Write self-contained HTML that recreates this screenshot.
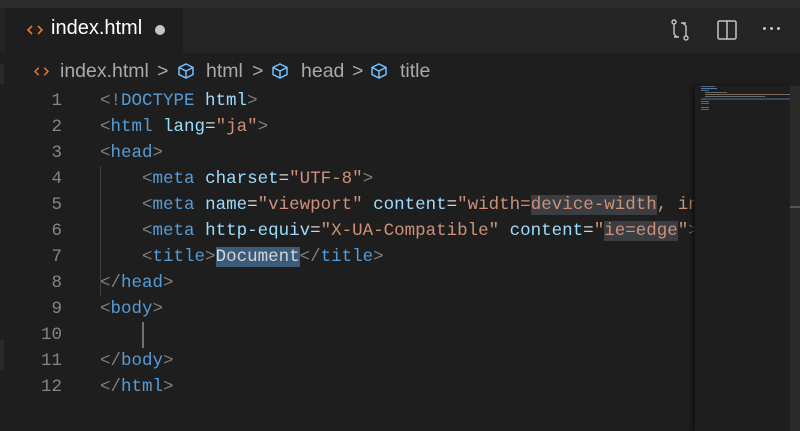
<!DOCTYPE html><html><head><style>
body{margin:0;width:800px;height:431px;background:#1e1e1e;overflow:hidden;position:relative;font-family:"Liberation Sans",sans-serif}
.top{position:absolute;left:0;top:0;width:800px;height:8px;background:#2c2c2c}
.tabbar{position:absolute;left:0;top:8px;width:800px;height:45px;background:#252526}
.tab{position:absolute;left:5px;top:0;width:178px;height:45px;background:#1e1e1e;color:#fff;font-size:20px}
.crumb{position:absolute;top:58px;left:0;height:26px;color:#a9a9a9;font-size:19.5px;line-height:26px;white-space:nowrap}
.code{position:absolute;left:0;top:88px;width:695px;height:343px;overflow:hidden;font-family:"Liberation Mono",monospace;font-size:17.5px}
.ln{position:absolute;left:0;width:62px;text-align:right;color:#858585;line-height:26px}
.line{position:absolute;left:100px;white-space:pre;line-height:26px;color:#d4d4d4}
.b{color:#808080}.t{color:#569cd6}.a{color:#9cdcfe}.s{color:#ce9178}
.hl{background:#3a3d41}.sel{background:#3b5b7a}
.guide{position:absolute;left:100px;width:1px;background:#404040}
.mini{position:absolute;left:695px;top:86px;width:95px;height:345px;background:#1e1e1e;box-shadow:-3px 0 4px #111}
.sb{position:absolute;left:790px;top:86px;width:10px;height:345px;background:#2a2a2a}
</style></head><body>
<div class="top"></div>
<div class="tabbar">
<div class="tab">
<svg style="position:absolute;left:22px;top:15px" width="16" height="14" viewBox="0 0 16 14"><path d="M5 3L1 7l4 4M11 3l4 4-4 4" stroke="#e37933" stroke-width="1.6" fill="none"/></svg>
<span style="position:absolute;left:46px;top:9px">index.html</span>
<div style="position:absolute;left:150px;top:17px;width:10px;height:10px;border-radius:50%;background:#c5c5c5"></div>
</div>
<svg style="position:absolute;left:668px;top:10px" width="24" height="24" viewBox="0 0 24 24" fill="none" stroke="#c5c5c5" stroke-width="1.4"><circle cx="6" cy="4" r="2"/><circle cx="18" cy="20" r="2"/><path d="M6 6v10l3 3M18 18V8l-3-3"/><path d="M11 19H6M13 5h5"/></svg>
<svg style="position:absolute;left:716px;top:11px" width="22" height="22" viewBox="0 0 22 22" fill="none" stroke="#c5c5c5" stroke-width="1.5"><rect x="2" y="2" width="18" height="18" rx="1.5"/><path d="M11 2v18"/></svg>
<div style="position:absolute;left:763px;top:19px;width:3px;height:3px;background:#c5c5c5;border-radius:50%;box-shadow:7px 0 #c5c5c5,14px 0 #c5c5c5"></div>
</div>
<div style="position:absolute;left:0;top:64px;width:4px;height:20px;background:#2a2a2a"></div>
<div class="crumb">
<svg style="position:absolute;left:34px;top:7px" width="15" height="13" viewBox="0 0 16 14"><path d="M5 3L1 7l4 4M11 3l4 4-4 4" stroke="#e37933" stroke-width="1.6" fill="none"/></svg>
<span style="position:absolute;left:60px">index.html</span><span style="position:absolute;left:157px">&gt;</span>
<svg style="position:absolute;left:176px;top:3px" width="20" height="20" viewBox="0 0 20 20" fill="none" stroke="#75beff" stroke-width="1.5"><path d="M10 3l7 3.5v7L10 17l-7-3.5v-7z M3 6.5L10 10l7-3.5M10 10v7"/></svg>
<span style="position:absolute;left:206px">html</span><span style="position:absolute;left:252px">&gt;</span>
<svg style="position:absolute;left:270px;top:3px" width="20" height="20" viewBox="0 0 20 20" fill="none" stroke="#75beff" stroke-width="1.5"><path d="M10 3l7 3.5v7L10 17l-7-3.5v-7z M3 6.5L10 10l7-3.5M10 10v7"/></svg>
<span style="position:absolute;left:301px">head</span><span style="position:absolute;left:352px">&gt;</span>
<svg style="position:absolute;left:369px;top:3px" width="20" height="20" viewBox="0 0 20 20" fill="none" stroke="#75beff" stroke-width="1.5"><path d="M10 3l7 3.5v7L10 17l-7-3.5v-7z M3 6.5L10 10l7-3.5M10 10v7"/></svg>
<span style="position:absolute;left:400px">title</span>
</div>
<div class="code">
<div class="guide" style="top:78px;height:130px"></div>
<div class="guide" style="left:142px;top:234px;height:26px;background:#707070;width:2px"></div>
<div class="ln" style="top:0">1</div><div class="line" style="top:0"><span class="b">&lt;!</span><span class="t">DOCTYPE</span> <span class="a">html</span><span class="b">&gt;</span></div>
<div class="ln" style="top:26px">2</div><div class="line" style="top:26px"><span class="b">&lt;</span><span class="t">html</span> <span class="a">lang</span>=<span class="s">"ja"</span><span class="b">&gt;</span></div>
<div class="ln" style="top:52px">3</div><div class="line" style="top:52px"><span class="b">&lt;</span><span class="t">head</span><span class="b">&gt;</span></div>
<div class="ln" style="top:78px">4</div><div class="line" style="top:78px">    <span class="b">&lt;</span><span class="t">meta</span> <span class="a">charset</span>=<span class="s">"UTF-8"</span><span class="b">&gt;</span></div>
<div class="ln" style="top:104px">5</div><div class="line" style="top:104px">    <span class="b">&lt;</span><span class="t">meta</span> <span class="a">name</span>=<span class="s">"viewport"</span> <span class="a">content</span>=<span class="s">"width=<span class="hl">device-width</span>, initial-scale=1.0"</span><span class="b">&gt;</span></div>
<div class="ln" style="top:130px">6</div><div class="line" style="top:130px">    <span class="b">&lt;</span><span class="t">meta</span> <span class="a">http-equiv</span>=<span class="s">"X-UA-Compatible"</span> <span class="a">content</span>=<span class="s">"<span class="hl">ie=edge</span>"</span><span class="b">&gt;</span></div>
<div class="ln" style="top:156px">7</div><div class="line" style="top:156px">    <span class="b">&lt;</span><span class="t">title</span><span class="b">&gt;</span><span class="sel">Document</span><span class="b">&lt;/</span><span class="t">title</span><span class="b">&gt;</span></div>
<div class="ln" style="top:182px">8</div><div class="line" style="top:182px"><span class="b">&lt;/</span><span class="t">head</span><span class="b">&gt;</span></div>
<div class="ln" style="top:208px">9</div><div class="line" style="top:208px"><span class="b">&lt;</span><span class="t">body</span><span class="b">&gt;</span></div>
<div class="ln" style="top:234px">10</div>
<div class="ln" style="top:260px">11</div><div class="line" style="top:260px"><span class="b">&lt;/</span><span class="t">body</span><span class="b">&gt;</span></div>
<div class="ln" style="top:286px">12</div><div class="line" style="top:286px"><span class="b">&lt;/</span><span class="t">html</span><span class="b">&gt;</span></div>
</div>
<div style="position:absolute;left:0;top:340px;width:4px;height:30px;background:#2a2a2a"></div>
<div class="mini">
<div style="position:absolute;left:6px;top:0;width:14px;height:1px;background:#4a6a8a"></div>
<div style="position:absolute;left:6px;top:2px;width:16px;height:1px;background:#5a7a9a"></div>
<div style="position:absolute;left:6px;top:4px;width:8px;height:1px;background:#4a6a8a"></div>
<div style="position:absolute;left:10px;top:6px;width:22px;height:1px;background:#6a6a6a"></div>
<div style="position:absolute;left:10px;top:8px;width:85px;height:1px;background:#7a6a5a"></div>
<div style="position:absolute;left:10px;top:10px;width:60px;height:1px;background:#6a6a6a"></div>
<div style="position:absolute;left:6px;top:12px;width:89px;height:2px;background:#2e4a66"></div>
<div style="position:absolute;left:6px;top:15px;width:8px;height:1px;background:#4a6a8a"></div>
<div style="position:absolute;left:6px;top:17px;width:8px;height:1px;background:#4a6a8a"></div>
<div style="position:absolute;left:6px;top:21px;width:8px;height:1px;background:#4a6a8a"></div>
<div style="position:absolute;left:6px;top:23px;width:8px;height:1px;background:#4a6a8a"></div>
</div>
<div class="sb"><div style="position:absolute;left:0;top:120px;width:10px;height:2px;background:#555"></div></div>
</body></html>
